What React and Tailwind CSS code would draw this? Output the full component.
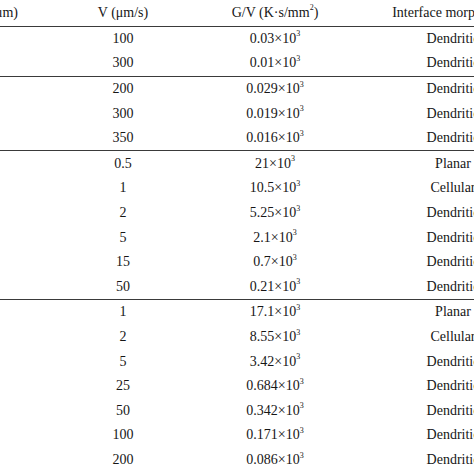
import React from 'react';

const groups = [
    [
        ['100', '0.03', 'Dendritic'],
        ['300', '0.01', 'Dendritic'],
    ],
    [
        ['200', '0.029', 'Dendritic'],
        ['300', '0.019', 'Dendritic'],
        ['350', '0.016', 'Dendritic'],
    ],
    [
        ['0.5', '21', 'Planar'],
        ['1', '10.5', 'Cellular'],
        ['2', '5.25', 'Dendritic'],
        ['5', '2.1', 'Dendritic'],
        ['15', '0.7', 'Dendritic'],
        ['50', '0.21', 'Dendritic'],
    ],
    [
        ['1', '17.1', 'Planar'],
        ['2', '8.55', 'Cellular'],
        ['5', '3.42', 'Dendritic'],
        ['25', '0.684', 'Dendritic'],
        ['50', '0.342', 'Dendritic'],
        ['100', '0.171', 'Dendritic'],
        ['200', '0.086', 'Dendritic'],
    ],
];

const cols = 'grid grid-cols-[60px_126px_178px_178px] w-[542px]';

const Sci = ({ v }) => (
    <span>
        {v}×10<sup className="text-[8px] top-[-0.8em]">3</sup>
    </span>
);

const App = () => {
    return (
        <div className="w-[474px] h-[474px] overflow-hidden bg-white text-[#161616] text-[14px] leading-none" style={{ fontFamily: '"Liberation Serif", "Times New Roman", serif' }}>
            <div className={`${cols} h-[25.5px] items-center`}>
                <div className="flex justify-end pr-[42px] whitespace-nowrap">Thickness (μm)</div>
                <div className="text-center whitespace-nowrap">V (μm/s)</div>
                <div className="text-center whitespace-nowrap">
                    G/V (K·s/mm<sup className="text-[8px] top-[-0.8em]">2</sup>)
                </div>
                <div className="text-center whitespace-nowrap">Interface morphology</div>
            </div>
            {groups.map((rows, gi) => (
                <div key={gi} className="border-t-[1.5px] border-[#3a3a3a] w-[542px]">
                    {rows.map((r, i) => (
                        <div key={i} className={`${cols} h-[24.6px] items-center`}>
                            <div />
                            <div className="text-center">{r[0]}</div>
                            <div className="text-center"><Sci v={r[1]} /></div>
                            <div className="text-center">{r[2]}</div>
                        </div>
                    ))}
                </div>
            ))}
        </div>
    );
};

export default App;
